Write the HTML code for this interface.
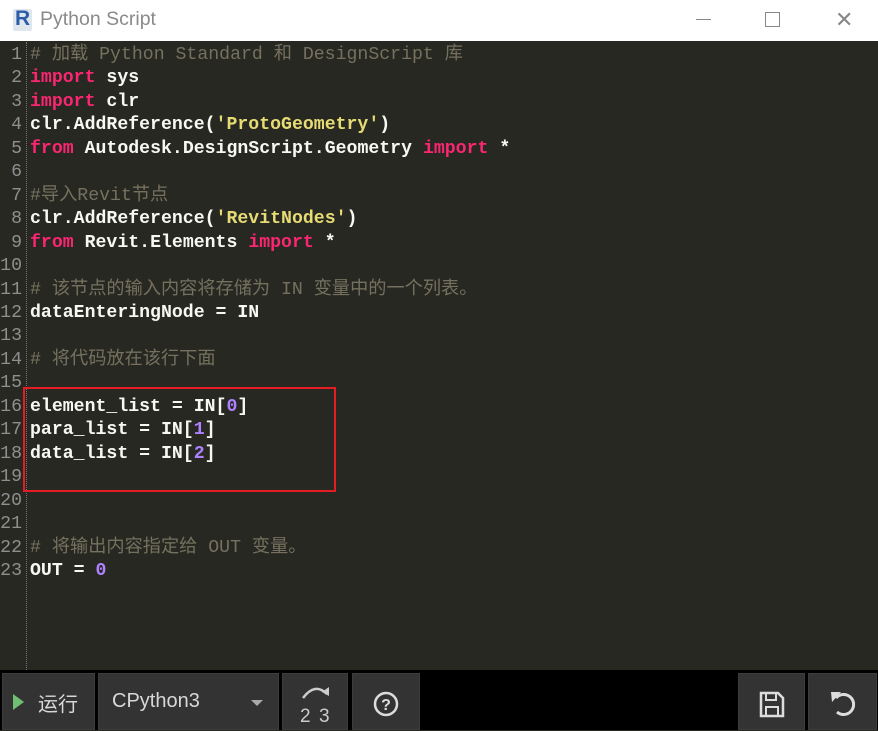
<!DOCTYPE html>
<html><head><meta charset="utf-8"><style>
*{margin:0;padding:0;box-sizing:border-box}
body{width:878px;height:730px;overflow:hidden;background:#272822;font-family:"Liberation Sans","Noto Sans CJK SC",sans-serif;position:relative}
.title{position:absolute;left:0;top:0;width:878px;height:42px;background:#fff}
.title .t{position:absolute;left:40px;top:8px;font-size:19.5px;color:#8a8a8a}
.logo{position:absolute;left:13px;top:9px;width:19px;height:22px;background:#dfe6ee;border-radius:2px}
.logo span{position:absolute;left:2px;top:-2px;font:bold 21px "Liberation Sans",sans-serif;color:#2a5ea8}
.ed{position:absolute;left:0;top:41px;width:878px;height:629px;background:#272822}
.gut{position:absolute;left:26px;top:42px;height:628px;border-left:1px dotted #777}
.ln{position:absolute;left:0;top:44px;width:22px;text-align:right;font:18.2px/23.45px "Liberation Mono","Noto Sans CJK SC",monospace;color:#8f8f8f}
.code{position:absolute;left:30px;top:44px;font:bold 18.2px/23.45px "Liberation Mono","Noto Sans CJK SC",monospace;color:#f8f8f2;white-space:pre}
.c{color:#75715e;font-weight:normal}
.k{color:#f92672}.s{color:#e6db74}.n{color:#ae81ff}
.box{position:absolute;left:23px;top:387px;width:313px;height:105px;border:2px solid #e51c23}
.bar{position:absolute;left:0;top:670px;width:878px;height:60px;background:#000}
.b{position:absolute;top:673px;height:57px;background:#333;border:1px solid #3d3d3d;color:#d8d8d8}
</style></head><body>
<div class="title"><div class="logo"><span>R</span></div><div class="t">Python Script</div>
<div style="position:absolute;left:696px;top:19px;width:15px;height:1px;background:#888"></div>
<div style="position:absolute;left:765px;top:12px;width:15px;height:15px;border:1px solid #888"></div>
<div style="position:absolute;left:835px;top:10px;font-size:22px;color:#888;line-height:20px">✕</div>
</div>
<div class="ed"></div>
<div class="gut"></div>
<div class="ln">1<br>2<br>3<br>4<br>5<br>6<br>7<br>8<br>9<br>10<br>11<br>12<br>13<br>14<br>15<br>16<br>17<br>18<br>19<br>20<br>21<br>22<br>23</div>
<div class="code"><span class="c"># 加载 Python Standard 和 DesignScript 库</span>
<span class="k">import</span> sys
<span class="k">import</span> clr
clr.AddReference(<span class="s">'ProtoGeometry'</span>)
<span class="k">from</span> Autodesk.DesignScript.Geometry <span class="k">import</span> *

<span class="c">#导入Revit节点</span>
clr.AddReference(<span class="s">'RevitNodes'</span>)
<span class="k">from</span> Revit.Elements <span class="k">import</span> *

<span class="c"># 该节点的输入内容将存储为 IN 变量中的一个列表。</span>
dataEnteringNode = IN

<span class="c"># 将代码放在该行下面</span>

element_list = IN[<span class="n">0</span>]
para_list = IN[<span class="n">1</span>]
data_list = IN[<span class="n">2</span>]



<span class="c"># 将输出内容指定给 OUT 变量。</span>
OUT = <span class="n">0</span></div>
<div class="box"></div>
<div class="bar"></div>
<div class="b" style="left:2px;width:93px"><div style="position:absolute;left:10px;top:20px;width:0;height:0;border-left:11px solid #6fbf73;border-top:8px solid transparent;border-bottom:8px solid transparent"></div><div style="position:absolute;left:35px;top:14px;font-size:20px">运行</div></div>
<div class="b" style="left:98px;width:181px"><div style="position:absolute;left:13px;top:16px;font-size:20px">CPython3</div><div style="position:absolute;left:152px;top:26px;border-top:6px solid #aaa;border-left:6px solid transparent;border-right:6px solid transparent"></div></div>
<div class="b" style="left:282px;width:66px"><svg width="66" height="57" style="position:absolute;left:0;top:0"><path d="M20 24 Q32 8 44 20" fill="none" stroke="#ccc" stroke-width="2.5"/><path d="M39 18 L46 22 L46 13 Z" fill="#ccc"/><text x="17" y="48" font-size="19" fill="#ccc" font-family="Liberation Sans">2</text><text x="36" y="48" font-size="19" fill="#ccc" font-family="Liberation Sans">3</text></svg></div>
<div class="b" style="left:352px;width:68px"><svg width="68" height="57" style="position:absolute;left:0;top:0"><circle cx="33" cy="30" r="11" fill="none" stroke="#ddd" stroke-width="2.5"/><text x="33" y="36" text-anchor="middle" font-size="16" font-weight="bold" fill="#ddd" font-family="Liberation Sans">?</text></svg></div>
<div class="b" style="left:738px;width:67px"><svg width="67" height="57" style="position:absolute;left:0;top:0"><path d="M22 19 H39 L44 24 V42 H22 Z" fill="none" stroke="#ddd" stroke-width="2.5"/><rect x="27" y="19" width="10" height="7" fill="none" stroke="#ddd" stroke-width="2"/><rect x="27" y="33" width="12" height="9" fill="none" stroke="#ddd" stroke-width="2"/></svg></div>
<div class="b" style="left:808px;width:69px"><svg width="69" height="57" style="position:absolute;left:0;top:0"><path d="M27 24 A10 10 0 1 1 28 38" fill="none" stroke="#ddd" stroke-width="3"/><path d="M22 18 L32 18 L23 28 Z" fill="#ddd"/></svg></div>
</body></html>
